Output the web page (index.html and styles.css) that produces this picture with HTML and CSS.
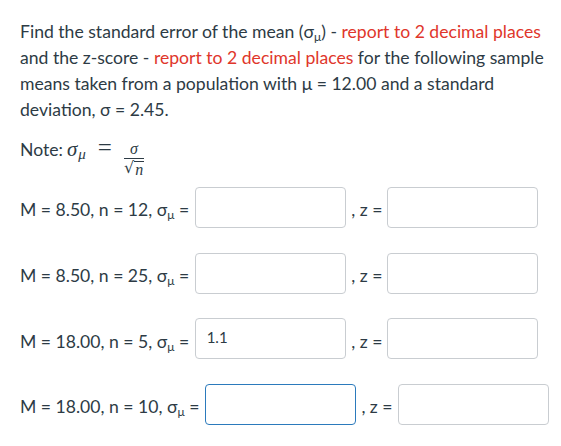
FILE: index.html
```html
<!DOCTYPE html>
<html>
<head>
<meta charset="utf-8">
<link rel="stylesheet" href="styles.css">
</head>
<body>
<div class="question">
  <p class="intro">Find the standard error of the mean (σ<sub class="sub">μ</sub>) - <span class="red">report to 2 decimal places</span> and the z-score - <span class="red">report to 2 decimal places</span> for the following sample means taken from a population with μ = 12.00 and a standard deviation, σ = 2.45.</p>
  <div class="note">Note: <span class="math"><span class="mi">σ</span><span class="msub">μ</span><span class="mo">=</span><span class="frac"><span class="num">σ</span><span class="den"><span class="rad">√</span><span class="radicand">n</span></span></span></span></div>

  <div class="row">
    <span class="label">M = 8.50, n = 12, σ<sub class="sub">μ</sub> =</span>
    <span class="box"></span>
    <span class="zlabel">, z =</span>
    <span class="box"></span>
  </div>
  <div class="row">
    <span class="label">M = 8.50, n = 25, σ<sub class="sub">μ</sub> =</span>
    <span class="box"></span>
    <span class="zlabel">, z =</span>
    <span class="box"></span>
  </div>
  <div class="row">
    <span class="label">M = 18.00, n = 5, σ<sub class="sub">μ</sub> =</span>
    <span class="box"><span class="val">1.1</span></span>
    <span class="zlabel">, z =</span>
    <span class="box"></span>
  </div>
  <div class="row">
    <span class="label">M = 18.00, n = 10, σ<sub class="sub">μ</sub> =</span>
    <span class="box focus"></span>
    <span class="zlabel">, z =</span>
    <span class="box"></span>
  </div>
</div>
</body>
</html>
```
FILE: styles.css
```css
html, body {
  margin: 0;
  background: #ffffff;
}
body {
  font-family: Lato, "Open Sans", sans-serif;
  font-size: 17.6px;
  color: #2d3b45;
}
.question {
  padding: 18.5px 10px 0 20px;
}
.intro {
  margin: 0;
  line-height: 26px;
}
.red {
  color: #e0362b;
}
.sub {
  font-size: 12px;
  vertical-align: -3px;
  line-height: 0;
}
.note {
  margin-top: 14.7px;
  height: 26px;
  line-height: 26px;
  display: flex;
  align-items: baseline;
}
.math {
  display: inline-flex;
  align-items: baseline;
  margin-left: 4px;
  font-family: "Liberation Serif", "DejaVu Serif", serif;
  line-height: 20px;
}
.mi {
  font-style: italic;
  font-size: 21px;
}
.msub {
  font-style: italic;
  font-size: 15px;
  position: relative;
  top: 3px;
  margin-left: 1px;
}
.mo {
  font-size: 25px;
  margin: 0 12px 0 12px;
}
.frac {
  display: inline-flex;
  flex-direction: column;
  align-items: center;
  font-size: 16px;
  line-height: 14px;
  position: relative;
  top: -2px;
}
.num {
  font-style: italic;
  padding: 0 5px 2px;
  border-bottom: 1px solid #2d3b45;
  width: 100%;
  text-align: center;
  box-sizing: border-box;
}
.den {
  display: inline-flex;
  align-items: flex-start;
  padding-top: 2px;
}
.rad {
  font-size: 16px;
  font-family: "DejaVu Sans", sans-serif;
}
.radicand {
  font-style: italic;
  border-top: 1px solid #2d3b45;
  padding: 0 1px;
  line-height: 15px;
}
.row {
  display: flex;
  align-items: flex-start;
  margin-top: 24.6px;
  white-space: pre;
}
.note + .row {
  margin-top: 24px;
}
.label {
  line-height: 24px;
  padding-top: 11.2px;
  margin-right: 5.5px;
}
.zlabel {
  line-height: 24px;
  padding-top: 11.2px;
  margin: 0 5px 0 5.5px;
}
.box {
  box-sizing: border-box;
  width: 151px;
  height: 41px;
  border: 1px solid #c9cdd1;
  border-radius: 4px;
  background: #fff;
  padding: 6px 11px;
}
.box.focus {
  border-color: #2b7abc;
}
.val {
  font-size: 15px;
  line-height: 24px;
  color: #2d3b45;
}
```
